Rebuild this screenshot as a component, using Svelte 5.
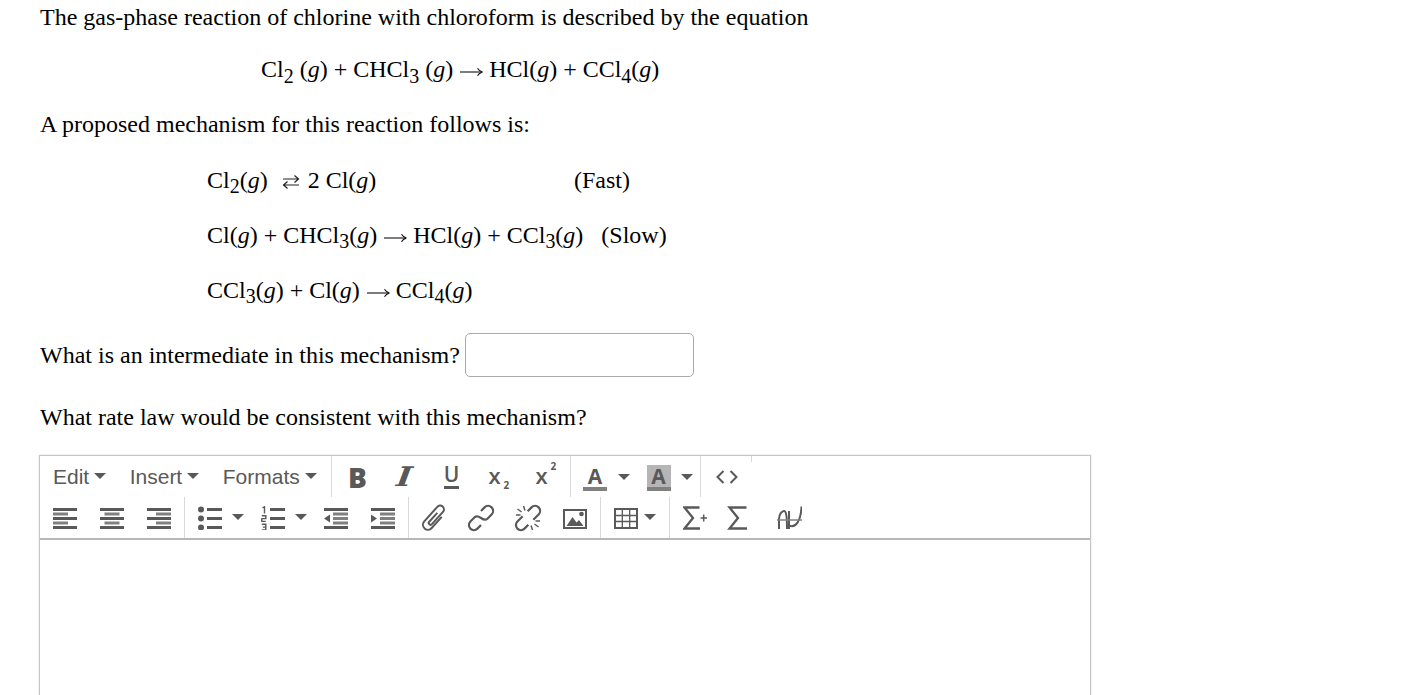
<script>
  const menus = ['Edit', 'Insert', 'Formats'];
</script>

{#snippet arrow()}
  <svg class="arrow" width="24" height="12" viewBox="0 0 24 12" aria-hidden="true"><path d="M1 6H22.500" stroke="#111" stroke-width="1.100"/><path d="M23.500 6c-2.500-.8-4-2-5-3.800M23.500 6c-2.500.8-4 2-5 3.800" fill="none" stroke="#111" stroke-width="1.100"/></svg>
{/snippet}

<main class="page">
  <p class="line first">The gas-phase reaction of chlorine with chloroform is described by the equation</p>
  <p class="line eq0">Cl<sub class="big">2</sub> (<i>g</i>) + CHCl<sub class="big">3</sub> (<i>g</i>) {@render arrow()} HCl(<i>g</i>) + CCl<sub class="big">4</sub>(<i>g</i>)</p>
  <p class="line">A proposed mechanism for this reaction follows is:</p>
  <div class="line step s4">
    <span class="eqcol">Cl<sub>2</sub>(<i>g</i>)
      <svg class="eqm" width="18" height="14" viewBox="0 0 18 14" aria-hidden="true"><path d="M1 4H16.500M12.500 .5l4 3.500-4 3.500M17 10H1.500M5.500 6.500L1.500 10l4 3.500" fill="none" stroke="#222" stroke-width="1.200"/></svg>
      2 Cl(<i>g</i>)</span><span class="tag">(Fast)</span>
  </div>
  <div class="line step">Cl(<i>g</i>) + CHCl<sub>3</sub>(<i>g</i>) {@render arrow()} HCl(<i>g</i>) + CCl<sub>3</sub>(<i>g</i>)<span class="slow">(Slow)</span></div>
  <div class="line step s6">CCl<sub>3</sub>(<i>g</i>) + Cl(<i>g</i>) {@render arrow()} CCl<sub>4</sub>(<i>g</i>)</div>
  <div class="line ask">What is an intermediate in this mechanism?<span class="input"></span></div>
  <p class="line ask2">What rate law would be consistent with this mechanism?</p>

  <section class="editor">
    <div class="toolbar">
      <div class="row">
        <div class="grp menus">
          {#each menus as m}
            <span class="menu">{m}<b class="caret"></b></span>
          {/each}
        </div>
        <div class="grp fmt">
          <span class="btn"><span class="tb bold">B</span></span>
          <span class="btn"><span class="tb ital">I</span></span>
          <span class="btn"><span class="tb und">U</span></span>
          <span class="btn"><span class="tb xs">x<small class="lo">2</small></span></span>
          <span class="btn"><span class="tb xs">x<small class="hi">2</small></span></span>
        </div>
        <div class="grp color">
          <span class="cbtn"><span class="aa">A</span><b class="caret"></b></span>
          <span class="cbtn"><span class="aa shade">A</span><b class="caret"></b></span>
        </div>
        <div class="grp code">
          <span class="btn">
            <svg width="24" height="24" viewBox="0 0 24 24"><path d="M8.500 6l-6 6 6 6M15.500 6l6 6-6 6" fill="none" stroke="#595959" stroke-width="2"/></svg>
          </span>
        </div>
        <i class="stub"></i>
      </div>
      <div class="row row2">
        <div class="grp align">
          <span class="btn"><svg width="24" height="24" viewBox="0 0 24 24"><path d="M0 3.500h24M0 12.500h24M0 21.500h24" class="h2"/><path d="M0 8h15M0 17h15" class="h1"/></svg></span>
          <span class="btn"><svg width="24" height="24" viewBox="0 0 24 24"><path d="M0 3.500h24M0 12.500h24M0 21.500h24" class="h2"/><path d="M4.500 8h15M4.500 17h15" class="h1"/></svg></span>
          <span class="btn"><svg width="24" height="24" viewBox="0 0 24 24"><path d="M0 3.500h24M0 12.500h24M0 21.500h24" class="h2"/><path d="M9 8h15M9 17h15" class="h1"/></svg></span>
        </div>
        <div class="grp lists">
          <span class="sbtn bul"><svg width="24" height="24" viewBox="0 0 24 24"><circle cx="3" cy="3.500" r="3" fill="#595959"/><circle cx="3" cy="12.500" r="3" fill="#595959"/><circle cx="3" cy="21.500" r="3" fill="#595959"/><path d="M9 3.500h15M9 12.500h15M9 21.500h15" class="h2"/></svg><b class="caret"></b></span>
          <span class="sbtn num"><svg width="24" height="24" viewBox="0 0 24 24"><path d="M9 3.500h15M9 12.500h15M9 21.500h15" class="h2"/><path d="M1.500 2l2-1.300V7.500M.800 9.800h4v2.800h-4v2.800h4M.800 18.300h4v2.800h-3h3v2.800h-4" fill="none" stroke="#595959" stroke-width="1.400"/></svg><b class="caret"></b></span>
          <span class="btn"><svg width="24" height="24" viewBox="0 0 24 24"><path d="M0 3.500h24M0 21.500h24" class="h2"/><path d="M9 8h15M9 12.500h15M9 17h15" class="h1"/><path d="M6 8.500v8L0 12.500z" fill="#595959"/></svg></span>
          <span class="btn"><svg width="24" height="24" viewBox="0 0 24 24"><path d="M0 3.500h24M0 21.500h24" class="h2"/><path d="M9 8h15M9 12.500h15M9 17h15" class="h1"/><path d="M0 8.500v8l6-4z" fill="#595959"/></svg></span>
        </div>
        <div class="grp insert">
          <span class="btn"><svg class="vis" width="24" height="24" viewBox="0 0 24 24"><g transform="rotate(42 12 12)"><path d="M17 6V21a5 5 0 0 1-10 0V1.500a3.800 3.800 0 0 1 7.600 0V18a1.800 1.800 0 0 1-3.600 0V6" fill="none" stroke="#595959" stroke-width="2"/></g></svg></span>
          <span class="btn"><svg class="vis" width="24" height="24" viewBox="0 0 24 24"><g transform="rotate(-45 12 12)" fill="none" stroke="#595959" stroke-width="2.200"><path d="M12 12c-.5-3-2-5-4-5H2a5 5 0 0 0 0 10H7M12 12c.5 3 2 5 4 5h6a5 5 0 0 0 0-10H17"/></g></svg></span>
          <span class="btn"><svg class="vis" width="24" height="24" viewBox="0 0 24 24"><g transform="rotate(-45 12 12)" fill="none" stroke="#595959" stroke-width="2.200"><path d="M9.500 7H2a5 5 0 0 0 0 10h5.500M14.500 17H22a5 5 0 0 0 0-10h-5.500"/></g><path d="M7.500 0l1.500 4.500M1.500 3l4 3M0 9h4.500M16.500 24l-1.500-4.500M22.500 21l-4-3M24 15h-4.500" stroke="#595959" stroke-width="1.500"/></svg></span>
          <span class="btn"><svg width="24" height="24" viewBox="0 0 24 24"><path d="M1 4h22v18H1z" fill="none" stroke="#595959" stroke-width="2"/><circle cx="18.500" cy="8" r="2.300" fill="#595959"/><path d="M3.500 20l6-9 4 5.500 2.500-2.500 4.500 6z" fill="#595959"/></svg></span>
        </div>
        <div class="grp table">
          <span class="sbtn"><svg width="24" height="24" viewBox="0 0 24 24"><path d="M1 3h22v19H1z" fill="none" stroke="#595959" stroke-width="2"/><path d="M1 9.500h22M1 15.500h22M8.300 3v19M15.700 3v19" fill="none" stroke="#595959" stroke-width="1.300"/></svg><b class="caret"></b></span>
        </div>
        <div class="grp math">
          <span class="btn sig"><svg width="24" height="24" viewBox="0 0 24 24"><path d="M16.500 1.500H1.500L10 12 1.500 22.500H17" fill="none" stroke="#595959" stroke-width="2.300"/><path d="M17.500 12H24M20.700 8.500v7" stroke="#595959" stroke-width="1.500"/></svg></span>
          <span class="btn sig2"><svg width="24" height="24" viewBox="0 0 24 24"><path d="M20.500 1.500H3.500L12 12 3.500 22.500H21" fill="none" stroke="#595959" stroke-width="2.300"/></svg></span>
          <span class="btn"><svg width="25" height="24" viewBox="0 0 25 24"><path d="M2 23V13C2 8 5 5 7 5s3 4 3 18M12 5V23M12 19.500c7 3 12-5 12.500-19" fill="none" stroke="#595959" stroke-width="2"/><path d="M0 14H25" stroke="#808080" stroke-width="1.500"/></svg></span>
        </div>
      </div>
    </div>
    <div class="area"></div>
  </section>
</main>

<style>
  :global(html), :global(body) { margin: 0; background: #fff; }
  .page {
    padding-left: 40px;
    font-family: "Liberation Serif", "Times New Roman", serif;
    font-size: 24px;
    color: #000;
  }
  .line { margin: 0; height: 28px; line-height: 28px; white-space: nowrap; }
  .first { padding-top: 3px; }
  .line + .line { margin-top: 27px; }
  .eq0.line { margin-top: 24px; padding-left: 221px; }
  .s4.line { margin-top: 28px; }
  .step { padding-left: 167px; }
  sub { font-size: 0.83em; line-height: 0; vertical-align: -0.25em; }
  sub.big { vertical-align: -0.3em; }
  .arrow { vertical-align: -1px; }
  .eqcol { display: inline-block; width: 367px; }
  .eqm { vertical-align: -1px; margin: 0 2px 0 8px; }
  .slow { margin-left: 18px; }
  .line.ask { display: flex; align-items: center; margin-top: 37px; }
  .input {
    display: block; width: 227px; height: 42px; margin-left: 5px;
    border: 1px solid #aaa; border-radius: 5px; margin-top: -1px;
  }
  .line.ask2 { margin-top: 34px; }

  .editor {
    margin: 24px 0 0 -1px;
    width: 1050px;
    border: 1px solid #c5c5c5;
    border-bottom: 0;
    box-shadow: 0 0 2px rgba(0,0,0,.15);
    font-family: "Liberation Sans", Arial, sans-serif;
    color: #595959;
  }
  .toolbar { border-bottom: 2px solid #b8b8b8; height: 82px; }
  .row { display: flex; height: 41px; position: relative; }
  .grp { display: flex; align-items: center; height: 100%; border-left: 1px solid #d9d9d9; box-sizing: border-box; flex: none; }
  .grp:first-child { border-left: 0; }
  .btn { display: flex; width: 47px; justify-content: center; align-items: center; flex: none; height: 100%; }
  .btn svg { display: block; }
  .btn svg.vis { overflow: visible; }
  .caret {
    display: inline-block; width: 0; height: 0; margin-left: 5px; flex: none;
    border: 6px solid transparent; border-top: 6px solid #595959; border-bottom: 0;
  }
  .menus { width: 291px; padding-left: 13px; gap: 23.5px; font-size: 21px; }
  .menu { display: flex; align-items: center; }
  .menu .caret { margin-top: -2px; }
  .fmt { width: 239px; padding-left: 2px; }
  .tb { font-size: 28px; line-height: 1; }
  .bold { font-family: "Open Sans", sans-serif; font-weight: 800; }
  .ital { display: inline-block; font-family: "DejaVu Serif", serif; font-style: italic; font-weight: 700; font-size: 27px; transform: skewX(-8deg) scaleX(1.2); }
  .und { font-family: "Open Sans", sans-serif; font-weight: 600; font-size: 21px; border-bottom: 3px solid #595959; line-height: 17px; padding: 0 0 3px; margin-top: 1px; }
  .xs { font-family: "Open Sans", sans-serif; font-weight: 600; font-size: 22px; position: relative; line-height: 1; margin-top: -3px; margin-left: -8px; }
  .xs small { position: absolute; left: 15px; font-size: 10px; font-weight: 700; }
  .lo { top: 16px; }
  .hi { top: -3px; }
  .color { width: 130px; padding-left: 12px; gap: 17px; }
  .cbtn { display: flex; align-items: center; height: 100%; }
  .aa {
    display: block; width: 24px; height: 26px; line-height: 22px; text-align: center;
    box-sizing: border-box; border-bottom: 4px solid #808080;
    font-family: "Open Sans", sans-serif; font-weight: 700; font-size: 21px; margin-top: 3px;
  }
  .shade { background: #b5b5b5; }
  .cbtn .caret { margin-left: 10.5px; }
  .code { width: 51px; padding-left: 2px; }
  .stub { position: absolute; left: 711px; top: 0; width: 1px; height: 6px; background: #d9d9d9; }

  .row2 .btn { justify-content: flex-start; padding-left: 12px; box-sizing: border-box; }
  .row2 .caret { margin-top: -2px; }
  .align { width: 144px; padding-left: 1px; }
  .lists { width: 224px; }
  .sbtn { display: flex; align-items: center; flex: none; }
  .bul { width: 76px; padding-left: 13px; box-sizing: border-box; }
  .num { width: 63px; }
  .lists .caret { margin-left: 10px; }
  .row2 .lists .btn { padding-left: 0; }
  .insert { width: 192px; padding-left: 1px; }
  .table { width: 69px; padding-left: 13px; }
  .table .caret { margin-left: 6px; }
  .math { padding-left: 13px; }
  .row2 .math .btn { padding-left: 0; }
  .row2 .math .sig { width: 43px; }
  .row2 .math .sig2 { width: 51px; }
  .h2 { stroke: #595959; stroke-width: 2.800; fill: none; }
  .h1 { stroke: #808080; stroke-width: 2.800; fill: none; }
  .area { height: 155px; background: #fff; }
</style>
